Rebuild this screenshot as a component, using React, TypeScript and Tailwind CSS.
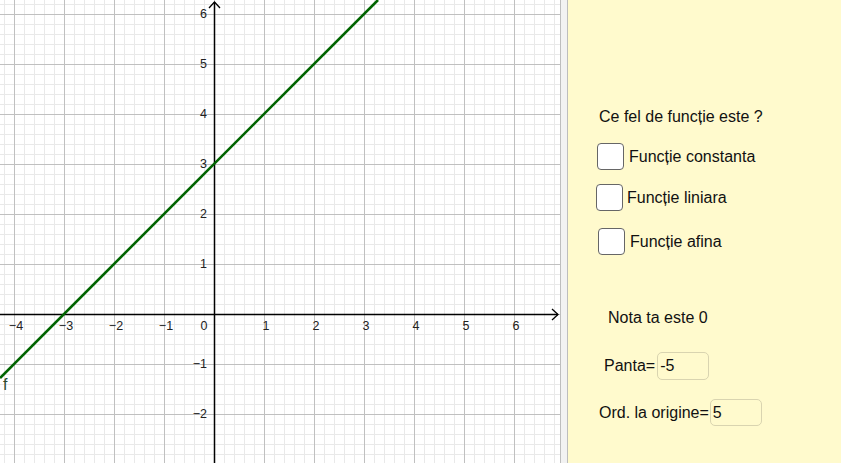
import React from "react";

const W = 560;
const H = 463;
const ox = 214;
const oy = 314;
const unit = 50;

const xTicks = [-4, -3, -2, -1, 1, 2, 3, 4, 5, 6];
const yTicks = [-2, -1, 1, 2, 3, 4, 5, 6];

function label(n: number) {
  return n < 0 ? `\u2212${-n}` : `${n}`;
}

function Graph() {
  const minorX: number[] = [];
  for (let x = ox % 10; x < W; x += 10) minorX.push(x);
  const minorY: number[] = [];
  for (let y = oy % 10; y < H; y += 10) minorY.push(y);

  return (
    <svg width={W} height={H} viewBox={`0 0 ${W} ${H}`} className="block shrink-0 bg-white">
      {minorX.map((x) => (
        <line key={"mx" + x} x1={x + 0.5} y1={0} x2={x + 0.5} y2={H} stroke="#e9e9e9" strokeWidth={1} />
      ))}
      {minorY.map((y) => (
        <line key={"my" + y} x1={0} y1={y + 0.5} x2={W} y2={y + 0.5} stroke="#e9e9e9" strokeWidth={1} />
      ))}
      {minorX
        .filter((x) => (x - ox) % 50 === 0)
        .map((x) => (
          <line key={"Mx" + x} x1={x + 0.5} y1={0} x2={x + 0.5} y2={H} stroke="#c0c0c0" strokeWidth={1} />
        ))}
      {minorY
        .filter((y) => (y - oy) % 50 === 0)
        .map((y) => (
          <line key={"My" + y} x1={0} y1={y + 0.5} x2={W} y2={y + 0.5} stroke="#c0c0c0" strokeWidth={1} />
        ))}

      {/* axes */}
      <line x1={0} y1={oy + 0.5} x2={W - 2} y2={oy + 0.5} stroke="#000" strokeWidth={1.5} />
      <line x1={ox + 0.5} y1={2} x2={ox + 0.5} y2={H} stroke="#000" strokeWidth={1.5} />
      <path d={`M ${W - 8} ${oy - 5} L ${W - 2} ${oy + 0.5} L ${W - 8} ${oy + 6}`} fill="none" stroke="#000" strokeWidth={1.3} />
      <path d={`M ${ox - 5} 8 L ${ox + 0.5} 2 L ${ox + 6} 8`} fill="none" stroke="#000" strokeWidth={1.3} />

      <g fontFamily="'Liberation Sans', Arial, sans-serif" fontSize={12.5} fill="#222">
        {xTicks.map((t) => (
          <text key={"xt" + t} x={ox + t * unit + 2} y={oy + 16} textAnchor="middle">
            {label(t)}
          </text>
        ))}
        <text x={ox - 10} y={oy + 16} textAnchor="middle">0</text>
        {yTicks.map((t) => (
          <text key={"yt" + t} x={ox - 7} y={oy - t * unit + 4} textAnchor="end">
            {label(t)}
          </text>
        ))}
      </g>

      {/* f(x) = x + 3 */}
      <line x1={0} y1={378} x2={378} y2={0} stroke="#006400" strokeWidth={2.6} />
      <text x={3} y={390} fontFamily="'Liberation Sans', Arial, sans-serif" fontSize={16} fill="#2d4a2d">
        f
      </text>
    </svg>
  );
}

function Check({ ml, gap, text }: { ml: string; gap: string; text: string }) {
  return (
    <div className={`flex items-center ${ml} ${gap}`}>
      <div className="h-[27px] w-[27px] shrink-0 rounded-[4px] border border-[#666] bg-white" />
      <span className="leading-5">{text}</span>
    </div>
  );
}

export default function App() {
  return (
    <div className="flex h-[463px] w-[841px] overflow-hidden font-['Liberation_Sans',Arial,sans-serif] text-[16px] text-[#111]">
      <Graph />
      <div className="h-full w-[8px] shrink-0 border-x border-[#bdbdbd] bg-[#f2f2f2]" />
      <div className="flex h-full flex-1 flex-col bg-[#fffacd] pt-[107px]">
        <p className="ml-[31px] leading-5">Ce fel de funcție este ?</p>
        <div className="mt-[16px]">
          <Check ml="ml-[29px]" gap="gap-[5px]" text="Funcție constanta" />
        </div>
        <div className="mt-[14px]">
          <Check ml="ml-[28px]" gap="gap-[4px]" text="Funcție liniara" />
        </div>
        <div className="mt-[17px]">
          <Check ml="ml-[30px]" gap="gap-[5px]" text="Funcție afina" />
        </div>
        <p className="ml-[40px] mt-[53px] leading-5">Nota ta este 0</p>
        <div className="ml-[36px] mt-[24px] flex items-center gap-[2px]">
          <span className="leading-5">Panta=</span>
          <div className="flex h-[28px] w-[52px] items-center rounded-[5px] border border-[#d9d4b0] px-[2px]">-5</div>
        </div>
        <div className="ml-[31px] mt-[19px] flex items-center gap-[1px]">
          <span className="leading-5">Ord. la origine=</span>
          <div className="flex h-[27px] w-[52px] items-center rounded-[5px] border border-[#d9d4b0] px-[2px]">5</div>
        </div>
      </div>
    </div>
  );
}
